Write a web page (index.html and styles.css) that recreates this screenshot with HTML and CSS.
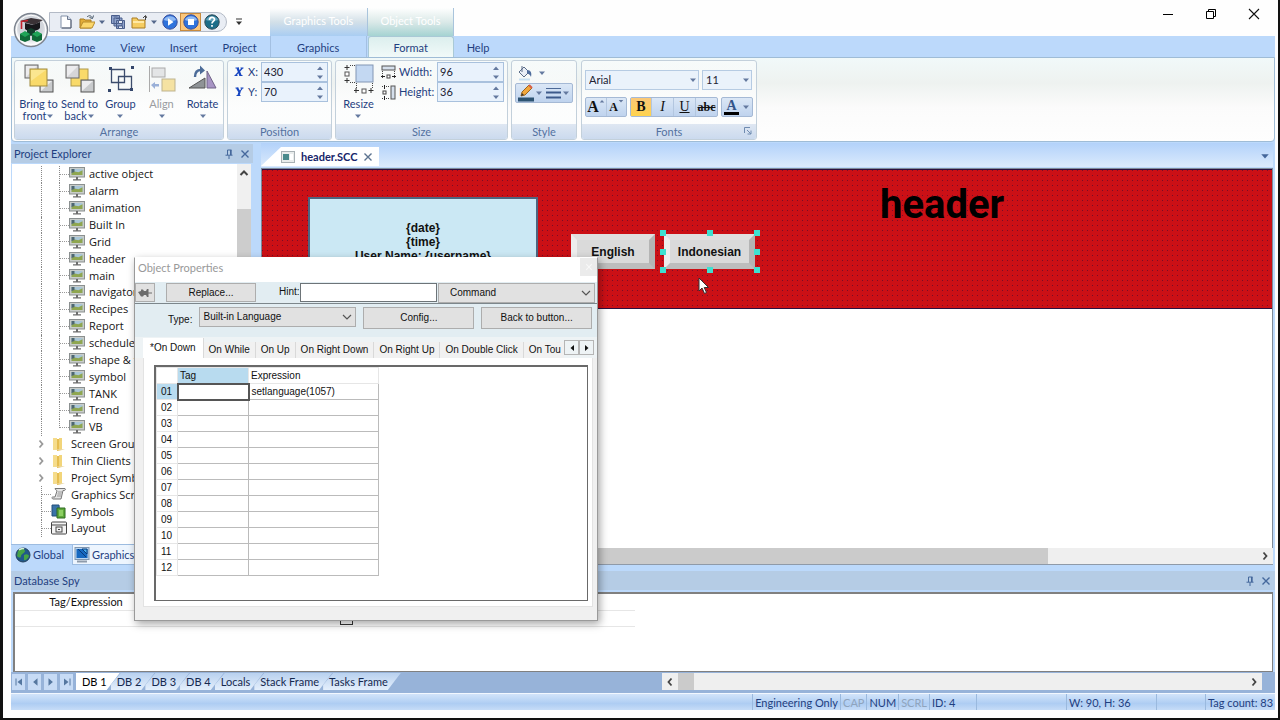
FILE: index.html
```html
<!DOCTYPE html>
<html lang="en">
<head>
    <meta charset="UTF-8">
    <meta name="viewport" content="width=device-width, initial-scale=1.0">
    <title>header.SCC</title>
    <link rel="stylesheet" href="styles.css">
</head>
<body>
    <svg class="sprite" aria-hidden="true">
        <symbol id="i-screen" viewBox="0 0 16 14">
            <rect x="0.5" y="0.5" width="15" height="9.5" fill="#c9cdca" stroke="#8b9090"/>
            <rect x="2.5" y="2" width="11" height="6" fill="#a9c6d8"/>
            <path d="M2.5 8V5.5l3-1 4 .8 4-2V8z" fill="#8fa650"/>
            <path d="M2.5 2h3v3l-3 1z" fill="#4f6770"/>
            <path d="M7 10h2v2.5H7zM4 12.2h8v1.3H4z" fill="#6d6d6d"/>
        </symbol>
        <symbol id="i-folder" viewBox="0 0 14 14">
            <path d="M2 1h4v12H2z" fill="#f5dc8c"/>
            <path d="M6 2h5v11l-5 1z" fill="#e6bd50"/>
            <path d="M8 1h3v11l-3 .5z" fill="#f2d57a"/>
            <path d="M2 13l9-1 3 1z" fill="#ead9a8"/>
        </symbol>
        <symbol id="i-pin" viewBox="0 0 10 10">
            <path d="M3.5 1h4M3.5 1v5M6.5 1v5M7.2 1v5M1.5 6.2h7M5 6.5V10" stroke="currentColor" fill="none"/>
        </symbol>
        <symbol id="i-close" viewBox="0 0 10 10">
            <path d="M1.5 1.5l7 7M8.5 1.5l-7 7" stroke="currentColor" stroke-width="1.4" fill="none"/>
        </symbol>
        <symbol id="i-back" viewBox="0 0 30 30">
            <rect x="1" y="1" width="13" height="13" fill="#d6d6d8" stroke="#666"/>
            <rect x="16" y="16" width="13" height="12" fill="#c8cacc" stroke="#555"/>
            <path d="M2 13L13 2H2zM17 27L28 17H17z" fill="#ececee"/>
        </symbol>
        <symbol id="i-up" viewBox="0 0 8 8"><path d="M1 6h6L4 2.5z" fill="currentColor"/></symbol>
        <symbol id="i-down" viewBox="0 0 8 8"><path d="M1 2.5h6L4 6z" fill="currentColor"/></symbol>
        <symbol id="i-left" viewBox="0 0 8 8"><path d="M6 1v6L2.5 4z" fill="currentColor"/></symbol>
        <symbol id="i-right" viewBox="0 0 8 8"><path d="M2 1v6l3.5-3z" fill="currentColor"/></symbol>
        <symbol id="i-chev-up" viewBox="0 0 10 10"><path d="M1.5 7L5 3.5 8.5 7" stroke="#444" stroke-width="2" fill="none"/></symbol>
        <symbol id="i-chev-left" viewBox="0 0 10 10"><path d="M6.5 1.5L3.5 5l3 3.5" stroke="#444" stroke-width="1.8" fill="none"/></symbol>
        <symbol id="i-chev-right" viewBox="0 0 10 10"><path d="M3.5 1.5L6.5 5l-3 3.5" stroke="currentColor" stroke-width="1.8" fill="none"/></symbol>
        <symbol id="i-chev-down" viewBox="0 0 10 10"><path d="M1 3l4 4 4-4" stroke="#555" stroke-width="1.2" fill="none"/></symbol>
    </svg>

    <div class="desktop">
    <div class="app">
        <header class="titlebar">
            <button class="orb" aria-label="Application menu">
                <svg width="36" height="36" viewBox="0 0 36 36">
                    <defs>
                        <radialGradient id="orb" cx=".5" cy=".4"><stop offset="0" stop-color="#c9ced6"/><stop offset=".75" stop-color="#d3d6dc"/><stop offset="1" stop-color="#f4f5f7"/></radialGradient>
                    </defs>
                    <circle cx="18" cy="18" r="16.5" fill="url(#orb)" stroke="#7d848f" stroke-width="1.5"/>
                    <circle cx="18" cy="18" r="14.8" fill="none" stroke="#fff"/>
                    <path d="M7 9l11-3 12 2-9 5z" fill="#3a3236"/>
                    <path d="M12 11v6c3 3 12 3 15-1v-6l-7 3z" fill="#17171b"/>
                    <path d="M8.5 9v8M8 9.5l7-1" stroke="#c2202c" stroke-width="1.6"/>
                    <path d="M18 16l4 2v4l-4 2-4-2v-4z" fill="#12402d"/>
                    <path d="M12 20l5 2v6l-5 2-5-2v-6z" fill="#0f6a38"/>
                    <path d="M24 20l5 2v6l-5 2-5-2v-6z" fill="#0f6a38"/>
                    <path d="M12 19l5 3-5 3-5-3zM24 19l5 3-5 3-5-3z" fill="#1fa457"/>
                </svg>
            </button>
            <div class="quick">
                <button aria-label="New"><svg width="14" height="16" viewBox="0 0 14 16"><path d="M2 2h6.5L12 5.5V14H2z" fill="#fff" stroke="#8190a8"/><path d="M8.5 2v3.5H12" fill="#cfd8e8" stroke="#6c7990"/><path d="M3 14h9V6" stroke="#565f70" fill="none"/></svg></button>
                <button aria-label="Open"><svg width="16" height="16" viewBox="0 0 16 16"><path d="M1 5h4l1 1h6v8H1z" fill="#e2ad38" stroke="#a97d22"/><path d="M4 8h12l-3 6H1z" fill="#fbd76c" stroke="#b78b2b"/><path d="M8 3c2-2 4-1.500 5 .5M14.500 1.500L13.500 4.500 10.500 3.500" fill="none" stroke="#456"/></svg></button>
                <button class="mini" aria-label="Open list"><svg width="8" height="8"><use href="#i-down"/></svg></button>
                <button aria-label="Save all"><svg width="16" height="16" viewBox="0 0 16 16" fill="#8fa3cc" stroke="#4b5f8c"><path d="M1.500 1.500h8v8h-8zM4 4h8v8H4zM6.500 6.500h8v8h-8z"/><path d="M8.500 6.500h4v3h-4zM3.500 2h4M6 4.500h4M8.500 12h4v2.500h-4z" fill="#e8edf6"/></svg></button>
                <button aria-label="Close project"><svg width="16" height="16" viewBox="0 0 16 16"><path d="M1 4h5l1 2h7v8H1z" fill="#f6cd62" stroke="#a97d22"/><path d="M2 8h11" stroke="#ffe9a5" stroke-width="2"/><path d="M14.500 6V2M12 4l2.500-2.500L16 4" fill="none" stroke="#444"/></svg></button>
                <button class="mini" aria-label="Project list"><svg width="8" height="8"><use href="#i-down"/></svg></button>
                <button aria-label="Run"><svg width="16" height="16" viewBox="0 0 16 16"><circle cx="8" cy="8" r="7.2" fill="#2f73dc" stroke="#3a4f9c"/><path d="M2 6c1-5 11-5 12 0-3 1.500-9 1.500-12 0z" fill="#8fb9f3"/><path d="M6 4.200v7.600L11.500 8z" fill="#fff"/></svg></button>
                <button class="lit" aria-label="Stop"><svg width="16" height="16" viewBox="0 0 16 16"><circle cx="8" cy="8" r="7.2" fill="#2f73dc" stroke="#3a4f9c"/><path d="M2 6c1-5 11-5 12 0-3 1.500-9 1.500-12 0z" fill="#8fb9f3"/><rect x="5" y="5" width="6" height="6" fill="#fff"/></svg></button>
                <button aria-label="Help"><svg width="16" height="16" viewBox="0 0 16 16"><circle cx="8" cy="8" r="7.2" fill="#1c6d89" stroke="#2d4a58"/><path d="M2 6c1-5 11-5 12 0-3 1.500-9 1.500-12 0z" fill="#5da0b8"/><path d="M5.500 6c0-3.500 5-3.500 5-.5 0 2-2.500 1.800-2.500 4M8 11v1.700" stroke="#fff" stroke-width="1.7" fill="none"/></svg></button>
            </div>
            <button class="quick-more" aria-label="Customize toolbar"><svg width="8" height="8" viewBox="0 0 8 8"><path d="M1 1h6" stroke="#333"/><path d="M1 3.500h6L4 7z" fill="#333"/></svg></button>
            <div class="context context-blue">Graphics Tools</div>
            <div class="context context-green">Object Tools</div>
            <div class="window-buttons">
                <button aria-label="Minimize"><svg width="12" height="12" viewBox="0 0 12 12"><path d="M1 6.500h10" stroke="#000"/></svg></button>
                <button aria-label="Restore"><svg width="12" height="12" viewBox="0 0 12 12" fill="none" stroke="#000"><path d="M1.500 3.500h7v7h-7zM3.500 3.500v-2h7v7h-2"/></svg></button>
                <button aria-label="Close"><svg width="12" height="12" viewBox="0 0 12 12"><path d="M1 1l10 10M11 1L1 11" stroke="#111" stroke-width="1.1"/></svg></button>
            </div>
        </header>

        <nav class="ribbon-tabs">
            <button>Home</button>
            <button>View</button>
            <button>Insert</button>
            <button>Project</button>
            <button class="tab-graphics">Graphics</button>
            <button class="tab-format">Format</button>
            <button>Help</button>
        </nav>

        <section class="ribbon">
            <div class="group group-arrange">
                <div class="group-body">
                    <button class="big">
                        <svg width="30" height="30" viewBox="0 0 30 30"><use href="#i-back"/><rect x="6" y="5" width="17" height="17" fill="#f9da6a" stroke="#a08a3c"/><path d="M7 6h15L7 17z" fill="#fbe690"/></svg>
                        <span>Bring to<br>front<svg width="8" height="8"><use href="#i-down"/></svg></span>
                    </button>
                    <button class="big">
                        <svg width="30" height="30" viewBox="0 0 30 30"><rect x="6" y="5" width="17" height="17" fill="#f9da6a" stroke="#b09a4c"/><use href="#i-back"/></svg>
                        <span>Send to<br>back<svg width="8" height="8"><use href="#i-down"/></svg></span>
                    </button>
                    <button class="big">
                        <svg width="30" height="30" viewBox="0 0 30 30" fill="none" stroke="#3c4c6c" stroke-width="1.3"><path d="M5.500 5.500h13v13h-13zM12.500 12.500h13v13h-13z"/><path d="M3 3h3v3H3zM25 2h3v3h-3zM2 25h3v3H2zM24 24h3v3h-3z" fill="#34466b" stroke="none"/></svg>
                        <span>Group<br><svg width="8" height="8"><use href="#i-down"/></svg></span>
                    </button>
                    <button class="big" disabled>
                        <svg width="30" height="30" viewBox="0 0 30 30"><path d="M2.500 2v26" stroke="#aaa"/><rect x="5" y="4" width="13" height="9" fill="#e3e5e6" stroke="#aaa"/><rect x="15" y="15" width="13" height="12" fill="#f5e2a2" stroke="#bdb38f"/><path d="M4 21l4-3v2h4v2.500H8V25z" fill="#9ab0d8"/></svg>
                        <span>Align<br><svg width="8" height="8"><use href="#i-down"/></svg></span>
                    </button>
                    <button class="big">
                        <svg width="30" height="30" viewBox="0 0 30 30"><path d="M1 24h16V14z" fill="#8f9396" stroke="#555"/><path d="M19 24h9L19 7z" fill="#a794c4" stroke="#706488"/><path d="M7 13c0-5 2-7 6-7" fill="none" stroke="#4c6c98" stroke-width="2.4"/><path d="M12 1.500l5 5-5 4z" fill="#4c6c98"/></svg>
                        <span>Rotate<br><svg width="8" height="8"><use href="#i-down"/></svg></span>
                    </button>
                </div>
                <div class="group-label">Arrange</div>
            </div>

            <div class="group group-position">
                <div class="group-body fields">
                    <div class="field">
                        <svg width="10" height="10" viewBox="0 0 10 10"><path d="M3.500 1l3 7.500" stroke="#1746c0" stroke-width="2.2"/><path d="M8.500 1L1.500 8.500M1.500 1h3.500M6.500 1h3M.5 8.500h3M5.500 8.500h3" stroke="#1746c0" stroke-width="1.2"/></svg>
                        <label for="pos-x">X:</label>
                        <span class="spin"><input id="pos-x" type="text" value="430"><button aria-label="Increase X"><svg width="8" height="8"><use href="#i-up"/></svg></button><button aria-label="Decrease X"><svg width="8" height="8"><use href="#i-down"/></svg></button></span>
                    </div>
                    <div class="field">
                        <svg width="10" height="10" viewBox="0 0 10 10"><path d="M3 1l2.500 4-1 3.500" fill="none" stroke="#1746c0" stroke-width="2.2"/><path d="M8.500 1L5.500 5M1.500 1h3M6.500 1h3M2.500 8.500h4" stroke="#1746c0" stroke-width="1.2"/></svg>
                        <label for="pos-y">Y:</label>
                        <span class="spin"><input id="pos-y" type="text" value="70"><button aria-label="Increase Y"><svg width="8" height="8"><use href="#i-up"/></svg></button><button aria-label="Decrease Y"><svg width="8" height="8"><use href="#i-down"/></svg></button></span>
                    </div>
                </div>
                <div class="group-label">Position</div>
            </div>

            <div class="group group-size">
                <div class="group-body">
                    <button class="big">
                        <svg width="30" height="30" viewBox="0 0 30 30"><rect x="12" y="1" width="17" height="17" fill="#c3d8f2" stroke="#8296b4"/><path d="M3 1v5M.5 3.500h5M3 14v5M.5 16.500h5M12 24v5M10 26.500h5M27 24v5M24.500 26.500h5" stroke="#333"/><rect x="1" y="8" width="4" height="4" fill="#fff" stroke="#555"/><rect x="18" y="25" width="4" height="4" fill="#fff" stroke="#555"/><path d="M6 1.500h5M6 18.500h5M12.500 19v5M28.500 19v5" stroke="#444" stroke-dasharray="1 1"/></svg>
                        <span>Resize<br><svg width="8" height="8"><use href="#i-down"/></svg></span>
                    </button>
                    <div class="fields">
                        <div class="field">
                            <svg width="15" height="15" viewBox="0 0 15 15"><rect x="1" y="1" width="13" height="4" fill="#d5dfeb" stroke="#555"/><path d="M1.500 6v8M13.500 6v8" stroke="#444" stroke-dasharray="1 1"/><path d="M0 11.500h4M11 11.500h4" stroke="#222"/><rect x="6" y="10" width="3" height="3" fill="#fff" stroke="#444"/></svg>
                            <label for="size-w">Width:</label>
                            <span class="spin"><input id="size-w" type="text" value="96"><button aria-label="Increase width"><svg width="8" height="8"><use href="#i-up"/></svg></button><button aria-label="Decrease width"><svg width="8" height="8"><use href="#i-down"/></svg></button></span>
                        </div>
                        <div class="field">
                            <svg width="15" height="15" viewBox="0 0 15 15"><rect x="10" y="1" width="4" height="13" fill="#d5dfeb" stroke="#555"/><path d="M1 1.500h8M1 13.500h8" stroke="#444" stroke-dasharray="1 1"/><path d="M3.500 0v4M3.500 11v4" stroke="#222"/><rect x="2" y="6" width="3" height="3" fill="#fff" stroke="#444"/></svg>
                            <label for="size-h">Height:</label>
                            <span class="spin"><input id="size-h" type="text" value="36"><button aria-label="Increase height"><svg width="8" height="8"><use href="#i-up"/></svg></button><button aria-label="Decrease height"><svg width="8" height="8"><use href="#i-down"/></svg></button></span>
                        </div>
                    </div>
                </div>
                <div class="group-label">Size</div>
            </div>

            <div class="group group-style">
                <div class="group-body fields">
                    <button class="fill" aria-label="Fill color">
                        <svg width="16" height="16" viewBox="0 0 16 16"><path d="M2 7l5-5 5 5-5 5z" fill="#e9eef6" stroke="#5c6d88"/><path d="M5 1v6" stroke="#5c6d88"/><path d="M10 5c4 0 5 3 4 7-1-3-3-3-4-4z" fill="#4f6c9c"/><path d="M2 14.500h11" stroke="#c8e0f2" stroke-width="2"/></svg>
                        <svg width="8" height="8"><use href="#i-down"/></svg>
                    </button>
                    <div class="cluster">
                        <button aria-label="Line color"><svg width="18" height="18" viewBox="0 0 18 18"><path d="M4 12l1-4 7-7 3 3-7 7z" fill="#f0a63c" stroke="#9a6420"/><path d="M4 12l1-3 2 2z" fill="#40352a"/><path d="M12 1l3 3" stroke="#d65f45" stroke-width="2"/><path d="M1 15.500h16" stroke="#2d5372" stroke-width="4"/></svg><svg width="8" height="8"><use href="#i-down"/></svg></button>
                        <button aria-label="Line style"><svg width="16" height="14" viewBox="0 0 16 14"><path d="M0 2.500h15" stroke="#4c6896"/><path d="M0 6.500h15" stroke="#3d5a8b" stroke-width="2"/><path d="M0 11.500h15" stroke="#3d5a8b" stroke-width="2"/></svg><svg width="8" height="8"><use href="#i-down"/></svg></button>
                    </div>
                </div>
                <div class="group-label">Style</div>
            </div>

            <div class="group group-fonts">
                <div class="group-body fonts">
                    <div class="font-row">
                        <span class="pick pick-family"><select aria-label="Font"><option>Arial</option></select><svg width="8" height="8"><use href="#i-down"/></svg></span>
                        <span class="pick pick-size"><select aria-label="Font size"><option>11</option></select><svg width="8" height="8"><use href="#i-down"/></svg></span>
                    </div>
                    <div class="font-row">
                        <div class="cluster letters"><button class="grow">A<svg width="6" height="6"><use href="#i-up"/></svg></button><button class="shrink">A<svg width="6" height="6"><use href="#i-down"/></svg></button></div>
                        <div class="cluster letters"><button class="on"><b>B</b></button><button><i>I</i></button><button><u>U</u></button><button class="strike"><s>abc</s></button></div>
                        <div class="cluster letters"><button class="color"><span>A</span><svg width="8" height="8"><use href="#i-down"/></svg></button></div>
                    </div>
                </div>
                <div class="group-label">Fonts
                    <svg class="launcher" width="8" height="8" viewBox="0 0 8 8" fill="none" stroke="#6f8bb0"><path d="M.5 6V.5H6M3 3l4 4M7 3.500V7H3.500"/></svg>
                </div>
            </div>
        </section>

        <main class="workspace">
            <aside class="explorer">
                <div class="panel-title">
                    <h2>Project Explorer</h2>
                    <button aria-label="Pin"><svg width="10" height="10"><use href="#i-pin"/></svg></button>
                    <button aria-label="Close"><svg width="10" height="10"><use href="#i-close"/></svg></button>
                </div>
                <div class="tree-box">
                    <ul class="tree">
                        <li class="leaf"><svg width="16" height="14"><use href="#i-screen"/></svg>active object</li>
                        <li class="leaf"><svg width="16" height="14"><use href="#i-screen"/></svg>alarm</li>
                        <li class="leaf"><svg width="16" height="14"><use href="#i-screen"/></svg>animation</li>
                        <li class="leaf"><svg width="16" height="14"><use href="#i-screen"/></svg>Built In</li>
                        <li class="leaf"><svg width="16" height="14"><use href="#i-screen"/></svg>Grid</li>
                        <li class="leaf"><svg width="16" height="14"><use href="#i-screen"/></svg>header</li>
                        <li class="leaf"><svg width="16" height="14"><use href="#i-screen"/></svg>main</li>
                        <li class="leaf"><svg width="16" height="14"><use href="#i-screen"/></svg>navigator</li>
                        <li class="leaf"><svg width="16" height="14"><use href="#i-screen"/></svg>Recipes</li>
                        <li class="leaf"><svg width="16" height="14"><use href="#i-screen"/></svg>Report</li>
                        <li class="leaf"><svg width="16" height="14"><use href="#i-screen"/></svg>schedule</li>
                        <li class="leaf"><svg width="16" height="14"><use href="#i-screen"/></svg>shape &amp; t</li>
                        <li class="leaf"><svg width="16" height="14"><use href="#i-screen"/></svg>symbol</li>
                        <li class="leaf"><svg width="16" height="14"><use href="#i-screen"/></svg>TANK</li>
                        <li class="leaf"><svg width="16" height="14"><use href="#i-screen"/></svg>Trend</li>
                        <li class="leaf last"><svg width="16" height="14"><use href="#i-screen"/></svg>VB</li>
                        <li class="folder"><svg class="twist" width="10" height="10"><use href="#i-chev-right"/></svg><svg width="14" height="14"><use href="#i-folder"/></svg>Screen Group</li>
                        <li class="folder"><svg class="twist" width="10" height="10"><use href="#i-chev-right"/></svg><svg width="14" height="14"><use href="#i-folder"/></svg>Thin Clients</li>
                        <li class="folder"><svg class="twist" width="10" height="10"><use href="#i-chev-right"/></svg><svg width="14" height="14"><use href="#i-folder"/></svg>Project Symb</li>
                        <li class="node"><svg width="16" height="15" viewBox="0 0 16 15"><path d="M4 1.500h10c1 1 0 2-1 2h-1L10 12H2c-2-1-1-2 0-2h2l2-6c0-1-2-1-2-2.500z" fill="#e4e4e4" stroke="#777"/><path d="M7 5h4M6.500 7h4M6 9h4" stroke="#999"/></svg>Graphics Scrip</li>
                        <li class="node"><svg width="16" height="15" viewBox="0 0 16 15"><path d="M1 1h7l1 11H1z" fill="#3973a8" stroke="#234f7b"/><path d="M6 4h8v10H6z" fill="#5da83a" stroke="#2f6a20"/><path d="M8 6h4v6H8z" fill="#8ccf62"/></svg>Symbols</li>
                        <li class="node last"><svg width="16" height="15" viewBox="0 0 16 15" fill="#f4f4f4" stroke="#444"><rect x=".5" y="1" width="15" height="12" rx="1"/><path d="M1 4h14"/><rect x="5" y="6" width="6" height="5"/><path d="M7 8.500h2"/></svg>Layout</li>
                    </ul>
                    <div class="vscroll"><svg width="10" height="10"><use href="#i-chev-up"/></svg><div class="thumb"></div></div>
                </div>
                <div class="explorer-tabs">
                    <button><svg width="16" height="16" viewBox="0 0 16 16"><circle cx="8" cy="8" r="7" fill="#20588a" stroke="#24405c"/><path d="M3 4c3-4 7-2 7 0S6 7 6 9s-2 2-4 0zM9 8c3-2 5 0 5 1-1 3-4 5-5 4z" fill="#46a346"/><path d="M4 3c1-1 4-2 5-1" stroke="#d5eed8" stroke-width="1.5" fill="none"/></svg>Global</button>
                    <button class="active"><svg width="16" height="16" viewBox="0 0 16 16"><rect x="1" y="0.5" width="14" height="12" fill="#b9d5f1" stroke="#7f95ae"/><rect x="2.5" y="2" width="11" height="9" fill="#1668c0"/><path d="M4 2l8 8M8 2h5v5z" stroke="#073a7c" fill="#49b0ee"/><path d="M3 14.500h10" stroke="#8e9bab" stroke-width="2"/></svg>Graphics</button>
                </div>
            </aside>

            <section class="editor">
                <div class="doc-tabs">
                    <div class="doc-tab">
                        <svg width="14" height="12" viewBox="0 0 14 12"><rect x=".5" y=".5" width="13" height="11" fill="#e9ecec" stroke="#a9b1b5"/><rect x="2" y="3" width="6" height="6" fill="#4b8a8c"/><path d="M9 3h3v6H9z" fill="#fff"/></svg>
                        <b>header.SCC</b>
                        <button aria-label="Close document"><svg width="10" height="10"><use href="#i-close"/></svg></button>
                    </div>
                    <svg class="doc-more" width="10" height="10" viewBox="0 0 8 8"><use href="#i-down"/></svg>
                </div>
                <div class="canvas">
                    <div class="screen">
                        <div class="info">{date}<br>{time}<br>User Name: {username}</div>
                        <div class="heading">header</div>
                        <button class="lang lang-en">English</button>
                        <button class="lang lang-id">Indonesian</button>
                        <svg class="handles" width="100" height="44" viewBox="0 0 100 44" fill="#3fe0d0">
                            <path d="M1 1h6v6H1zM48 1h6v6h-6zM95 1h6v6h-6zM1 20h6v6H1zM95 20h6v6h-6zM1 38h6v6H1zM48 38h6v6h-6zM95 38h6v6h-6z"/>
                        </svg>
                        <svg class="pointer" width="12" height="18" viewBox="0 0 12 18"><path d="M1 1v13l3-3 2.500 5.500 2-1L6.200 10.500h4.300z" fill="#fff" stroke="#333"/></svg>
                    </div>
                </div>
                <div class="hscroll"><div class="thumb"></div><svg width="10" height="10" color="#444"><use href="#i-chev-right"/></svg></div>
            </section>
        </main>

        <section class="spy">
            <div class="panel-title">
                <h2>Database Spy</h2>
                <button aria-label="Pin"><svg width="10" height="10"><use href="#i-pin"/></svg></button>
                <button aria-label="Close"><svg width="10" height="10"><use href="#i-close"/></svg></button>
            </div>
            <div class="spy-box">
                <table class="spy-table">
                    <tr><th>Tag/Expression</th><th></th><th></th></tr>
                    <tr><td></td><td><input type="checkbox" aria-label="Continuous"></td><td></td></tr>
                </table>
            </div>
            <div class="sheets">
                <button class="nav" aria-label="First"><svg width="10" height="10" viewBox="0 0 10 10"><path d="M2 1.500v7" stroke="#55779f"/><path d="M8 1.500v7L3.500 5z" fill="#55779f"/></svg></button>
                <button class="nav" aria-label="Previous"><svg width="10" height="10" viewBox="0 0 8 8"><use href="#i-left"/></svg></button>
                <button class="nav" aria-label="Next"><svg width="10" height="10" viewBox="0 0 8 8"><use href="#i-right"/></svg></button>
                <button class="nav" aria-label="Last"><svg width="10" height="10" viewBox="0 0 10 10"><path d="M8 1.500v7" stroke="#55779f"/><path d="M2 1.500v7L6.500 5z" fill="#55779f"/></svg></button>
                <button class="sheet active"><span>DB 1</span></button>
                <button class="sheet"><span>DB 2</span></button>
                <button class="sheet"><span>DB 3</span></button>
                <button class="sheet"><span>DB 4</span></button>
                <button class="sheet"><span>Locals</span></button>
                <button class="sheet"><span>Stack Frame</span></button>
                <button class="sheet"><span>Tasks Frame</span></button>
                <div class="hscroll"><svg width="10" height="10"><use href="#i-chev-left"/></svg><div class="thumb"></div><svg class="end" width="10" height="10" color="#444"><use href="#i-chev-right"/></svg></div>
            </div>
        </section>

        <footer class="status">
            <span>Engineering Only</span>
            <span class="off">CAP</span>
            <span>NUM</span>
            <span class="off">SCRL</span>
            <span class="id">ID: 4</span>
            <span class="blank-wide"></span>
            <span class="dims">W: 90, H: 36</span>
            <span class="blank"></span>
            <span class="count">Tag count: 83</span>
        </footer>

        <div class="dialog" role="dialog" aria-labelledby="dialog-title">
            <div class="dialog-title"><span id="dialog-title">Object Properties</span><button aria-label="Close"><svg width="8" height="8"><use href="#i-close"/></svg></button></div>
            <div class="dialog-bar">
                <button class="tack" aria-label="Keep open"><svg width="14" height="10" viewBox="0 0 14 10"><path d="M0 4l3-1V1.500h2L6 3h2l1-2h1.500v8H9L8 7H6L5 8.500H3z" fill="#6c6c6c"/><path d="M10 5h4" stroke="#6c6c6c"/></svg></button>
                <button class="replace">Replace...</button>
                <label for="hint">Hint:</label>
                <input id="hint" type="text">
                <span class="combo combo-command"><select aria-label="Dynamic"><option>Command</option></select><svg width="10" height="10"><use href="#i-chev-down"/></svg></span>
            </div>
            <div class="dialog-type">
                <label for="type">Type:</label>
                <span class="combo"><select id="type"><option>Built-in Language</option></select><svg width="10" height="10"><use href="#i-chev-down"/></svg></span>
                <button>Config...</button>
                <button>Back to button...</button>
            </div>
            <div class="dialog-tabs">
                <div class="tab-strip">
                    <button class="active">*On Down</button>
                    <button>On While</button>
                    <button>On Up</button>
                    <button>On Right Down</button>
                    <button>On Right Up</button>
                    <button>On Double Click</button>
                    <button>On Tou</button>
                </div>
                <button class="step" aria-label="Scroll tabs left"><svg width="8" height="8"><use href="#i-left"/></svg></button>
                <button class="step" aria-label="Scroll tabs right"><svg width="8" height="8"><use href="#i-right"/></svg></button>
            </div>
            <div class="sheet-panel">
                <div class="grid-frame">
                    <table class="grid">
                        <tr><th></th><th class="sel">Tag</th><th>Expression</th></tr>
                        <tr><th class="sel">01</th><td class="cursor"></td><td>setlanguage(1057)</td></tr>
                        <tr><th>02</th><td></td><td></td></tr>
                        <tr><th>03</th><td></td><td></td></tr>
                        <tr><th>04</th><td></td><td></td></tr>
                        <tr><th>05</th><td></td><td></td></tr>
                        <tr><th>06</th><td></td><td></td></tr>
                        <tr><th>07</th><td></td><td></td></tr>
                        <tr><th>08</th><td></td><td></td></tr>
                        <tr><th>09</th><td></td><td></td></tr>
                        <tr><th>10</th><td></td><td></td></tr>
                        <tr><th>11</th><td></td><td></td></tr>
                        <tr><th>12</th><td></td><td></td></tr>
                    </table>
                </div>
            </div>
        </div>
    </div>
    </div>
</body>
</html>
```

FILE: styles.css
```css
:root {
    --ui: Lato, "Open Sans", sans-serif;
    --tree: "Open Sans", "Noto Sans", sans-serif;
    --dialog: "Liberation Sans", Arial, sans-serif;
    --blue: #bcd9fb;
    --title: #b5cce5;
    --text: #1f4080;
    --arrow: #64799f;
    --line: #a9c1dd;
}

* {
    margin: 0;
    padding: 0;
    box-sizing: border-box;
}

body {
    min-height: 100vh;
    background: #111;
    font-family: var(--ui);
    font-size: 11px;
    line-height: 12px;
    color: var(--text);
    display: flex;
}

button, input, select {
    font: inherit;
    color: inherit;
    border: none;
    background: none;
    appearance: none;
    border-radius: 0;
    outline: none;
}

svg {
    display: block;
    flex: none;
}

.sprite {
    position: absolute;
    width: 0;
    height: 0;
}

.desktop {
    flex: 1;
    display: flex;
    margin: 0 2px 2px 3px;
    padding: 0 3px 8px 8px;
    background: #fefefe;
}

.app {
    position: relative;
    flex: 1;
    min-width: 0;
    display: flex;
    flex-direction: column;
    background: var(--blue);
}

/* title bar */
.titlebar {
    display: flex;
    align-items: flex-end;
    height: 36px;
    background: #fefefe;
}

.orb {
    position: absolute;
    left: 2px;
    top: 12px;
    z-index: 2;
}

.quick {
    display: flex;
    align-items: center;
    height: 20px;
    width: 178px;
    margin: 0 0 4px 38px;
    padding-left: 5px;
    border: 1px solid #b3bac6;
    border-radius: 0 10px 10px 0;
    background: #e9edf4;
}

.quick button {
    width: 21px;
    height: 18px;
    display: grid;
    place-items: center;
}

.quick .mini {
    width: 10px;
    color: #55688c;
}

.quick .lit {
    border: 1px solid #c98b3d;
    background: #fbc77c;
}

.quick-more {
    align-self: center;
    margin: 8px 27px 0 8px;
}

.context {
    height: 28px;
    padding-top: 7px;
    text-align: center;
    color: #fff;
    border-right: 1px solid #a9c4dc;
}

.context-blue {
    width: 98px;
    background: linear-gradient(#fefefe, #d3e0e8 50%, #a9cdf2);
}

.context-green {
    width: 86px;
    background: linear-gradient(#fefefe, #dbe9e8 50%, #a5d3d2);
}

.window-buttons {
    display: flex;
    gap: 31px;
    margin: 0 15px 16px auto;
}

/* ribbon */
.ribbon-tabs {
    display: flex;
    gap: 1px;
    height: 21px;
    padding-left: 43px;
}

.ribbon-tabs button {
    padding: 1px 12px 0;
    height: 22px;
}

.ribbon-tabs .tab-graphics {
    width: 97px;
    border: solid #a3c0e2;
    border-width: 0 1px;
}

.ribbon-tabs .tab-format {
    width: 86px;
    border: 1px solid #a9c9d6;
    border-bottom: none;
    border-radius: 3px 3px 0 0;
    background: linear-gradient(#dcefee, #f2faf9);
}

.ribbon {
    display: flex;
    gap: 3px;
    height: 85px;
    padding: 2px 2px 1px;
    border: 1px solid #9fbcd6;
    border-radius: 0 0 4px 4px;
    background: linear-gradient(#f1f9f9, #eef2f0 30%, #fbfbfb 60%, #fefefe);
}

.group {
    display: flex;
    flex-direction: column;
    border: 1px solid #c3d0db;
    border-radius: 3px;
    background: linear-gradient(rgba(255, 255, 255, .4), #fcfdfd);
}

.group-arrange { width: 210px; }
.group-position { width: 105px; }
.group-size { width: 173px; }
.group-style { width: 66px; }
.group-fonts { width: 176px; margin-left: 1px; }

.group-body {
    flex: 1;
    display: flex;
}

.group-label {
    height: 15px;
    line-height: 15px;
    text-align: center;
    color: #5371a0;
    background: linear-gradient(#dfe7f2, #cbdaee);
    border-radius: 0 0 2px 2px;
}

.launcher {
    float: right;
    margin: 3px 4px 0 -12px;
}

.group-arrange .group-body {
    padding-left: 3px;
}

.big {
    width: 41px;
    display: flex;
    flex-direction: column;
    align-items: center;
    padding-top: 3px;
    white-space: nowrap;
}

.big span {
    margin-top: 4px;
}

.big span svg {
    display: inline-block;
    color: var(--arrow);
}

.big:disabled {
    color: #9a9ca0;
}

.fields {
    display: flex;
    flex-direction: column;
    align-items: flex-end;
    padding: 1px 3px;
}

.field {
    display: flex;
    align-items: center;
    height: 20px;
}

.field label {
    width: 17px;
    padding-left: 4px;
}

.group-size .big {
    width: 46px;
}

.group-size .fields {
    flex: 1;
    align-items: flex-start;
    padding-left: 0;
}

.group-size .field label {
    width: 41px;
    padding-left: 3px;
}

.spin {
    display: grid;
    grid-template-columns: 1fr 14px;
    grid-template-rows: 9px 9px;
    width: 67px;
    border: 1px solid var(--line);
    background: #e9f2fc;
    color: var(--arrow);
}

.spin input {
    grid-row: span 2;
    width: 100%;
    padding-left: 2px;
    color: #223;
}

.spin button {
    display: grid;
    place-items: center;
}

.group-style .fields {
    align-items: flex-start;
}

.fill {
    display: flex;
    align-items: center;
    gap: 5px;
    height: 21px;
    padding-left: 2px;
    color: var(--arrow);
}

.cluster {
    display: flex;
    height: 20px;
    border: 1px solid #a5b9d5;
    border-radius: 2px;
    background: linear-gradient(#dbe7f6, #bfd3ee);
    color: var(--arrow);
}

.cluster button {
    display: flex;
    align-items: center;
    justify-content: center;
}

.group-style .cluster button {
    width: 28px;
}

.fonts {
    flex-direction: column;
    gap: 7px;
    padding: 9px 3px 0;
}

.font-row {
    display: flex;
    gap: 3px;
}

.pick, .combo {
    display: grid;
    align-items: center;
}

.pick select, .pick svg, .combo select, .combo svg {
    grid-area: 1 / 1;
}

.pick svg, .combo svg {
    justify-self: end;
    margin-right: 2px;
    color: var(--arrow);
    pointer-events: none;
}

.pick select {
    width: 100%;
    height: 20px;
    padding-left: 3px;
    border: 1px solid #b6cbe3;
    background: #eaf2fb;
    color: #223;
}

.pick-family { width: 114px; }
.pick-size { width: 50px; }

.letters {
    font-family: "Liberation Serif", serif;
    font-size: 14px;
    color: #111;
}

.letters button {
    width: 22px;
}

.letters button + button {
    border-left: 1px solid #b3c6df;
}

.letters svg {
    align-self: flex-start;
    color: var(--arrow);
}

.letters .grow, .letters .shrink {
    width: 20px;
    font-size: 16px;
    font-weight: bold;
}

.letters .shrink {
    font-size: 12px;
}

.letters .on {
    width: 20px;
    background: linear-gradient(#fbc878, #ffd34d);
}

.letters .strike {
    font-size: 12px;
    font-weight: bold;
}

.letters .color {
    width: 30px;
    gap: 3px;
}

.letters .color svg {
    align-self: center;
}

.color span {
    width: 15px;
    line-height: 13px;
    color: #35558a;
    font-weight: bold;
    border-bottom: 3px solid #000;
}

/* workspace */
.workspace {
    flex: 1;
    display: flex;
    gap: 8px;
    padding: 2px 2px 6px 0;
}

.explorer {
    width: 242px;
    display: flex;
    flex-direction: column;
}

.panel-title {
    display: flex;
    align-items: center;
    gap: 6px;
    height: 19px;
    padding: 0 3px;
    background: var(--title);
}

.panel-title h2 {
    flex: 1;
    font-size: 11px;
    font-weight: normal;
}

.panel-title button {
    color: #45689c;
}

.tree-box {
    flex: 1;
    display: flex;
    margin: 1px 2px 0 1px;
    background: #fff;
    font-family: var(--tree);
}

.tree {
    flex: 1;
    display: flex;
    flex-direction: column;
    padding: 2px 0 7px;
    list-style: none;
    color: #151515;
    white-space: nowrap;
    overflow: hidden;
}

.tree li {
    flex: 1;
    display: flex;
    align-items: center;
    margin-left: 29px;
    border-left: 1px dotted #888;
}

.tree .leaf {
    gap: 4px;
}

.tree .leaf::before {
    content: "";
    align-self: stretch;
    width: 10px;
    margin: 0 -5px 0 17px;
    border-left: 1px dotted #888;
    background: linear-gradient(90deg, #999 50%, transparent 50%) 0 50% / 2px 1px repeat-x;
}

.tree .leaf.last::before {
    margin-bottom: 8px;
    background-position: 0 100%;
}

.tree .folder {
    border-left-color: transparent;
}

.twist {
    margin: 0 5px 0 -6px;
    color: #999;
}

.tree .folder svg + svg {
    margin-right: 6px;
}

.tree .node::before {
    content: "";
    width: 9px;
    height: 1px;
    background: linear-gradient(90deg, #999 50%, transparent 50%) 0 0 / 2px 1px repeat-x;
}

.tree .node svg {
    margin-right: 4px;
}

.vscroll {
    width: 14px;
    background: #f0f0f0;
}

.vscroll svg {
    margin: 4px 2px 31px;
}

.vscroll .thumb {
    height: 200px;
    background: #cdcdcd;
}

.explorer-tabs {
    display: flex;
    height: 21px;
    border-top: 1px solid #9dbce0;
}

.explorer-tabs button {
    display: flex;
    align-items: center;
    gap: 2px;
    padding: 0 8px 0 4px;
}

.explorer-tabs .active {
    padding: 0 6px 0 1px;
    border: 1px solid #9dbce0;
    border-top: none;
    background: #edf5fe;
}

.editor {
    flex: 1;
    min-width: 0;
    display: flex;
    flex-direction: column;
}

.doc-tabs {
    display: flex;
    align-items: flex-end;
    justify-content: space-between;
    height: 24px;
    margin-top: -1px;
    padding-bottom: 1px;
    background: linear-gradient(#b3d2fa, #dbeafc);
}

.doc-tab {
    display: flex;
    align-items: center;
    gap: 6px;
    height: 19px;
    padding: 0 6px 0 20px;
    background: #fff;
    color: #16246a;
    clip-path: polygon(20px 0, 100% 0, 100% 100%, 0 100%);
}

.doc-tab button {
    color: #5c7390;
}

.doc-more {
    margin: 0 3px 5px;
    color: #44669a;
}

.canvas {
    flex: 1;
    margin-top: 1px;
    border: 1px solid #7e8a98;
    border-width: 1px 1px 0;
    background: #fff;
}

.screen {
    position: relative;
    height: 140px;
    border: 1px solid #2c1140;
    border-width: 1px 0;
    background: #cb1016 conic-gradient(at 1px 1px, transparent 75%, #7a0c26 0) 0 0 / 5px 5px;
    font-family: var(--dialog);
    font-weight: bold;
    color: #111;
}

.info {
    position: absolute;
    left: 46px;
    top: 27px;
    width: 230px;
    height: 84px;
    padding-top: 22px;
    border: 2px solid #4d6580;
    background: #cbe8f4;
    font-size: 12px;
    line-height: 14px;
    text-align: center;
}

.heading {
    position: absolute;
    left: 618px;
    top: 11px;
    font-family: Roboto, sans-serif;
    font-size: 40px;
    line-height: 48px;
    color: #000;
}

.lang {
    position: absolute;
    top: 64px;
    height: 35px;
    border: 6px solid;
    border-color: #e0e0e0 #b4b4b4 #bdbdbd #ededed;
    background: #dadada;
    font-size: 12px;
    white-space: nowrap;
}

.lang-en { left: 309px; width: 84px; }
.lang-id { left: 402px; width: 91px; }

.handles {
    position: absolute;
    left: 397px;
    top: 59px;
    overflow: visible;
}

.pointer {
    position: absolute;
    left: 436px;
    top: 107px;
}

.hscroll {
    display: flex;
    align-items: center;
    height: 17px;
    background: #efefef;
    border-bottom: 1px solid #8f9aa8;
}

.hscroll .thumb {
    height: 100%;
    background: #cbcbcb;
}

.editor .hscroll {
    justify-content: space-between;
    padding-right: 3px;
}

.editor .hscroll .thumb {
    width: 78%;
}

/* database spy */
.spy .panel-title {
    padding-right: 4px;
}

.spy-box {
    height: 80px;
    margin: 2px 2px 0;
    border: solid #808080;
    border-width: 2px 1px 1px 2px;
    background: #fff;
}

.spy-table {
    width: 620px;
    border-collapse: collapse;
    table-layout: fixed;
    color: #111;
}

.spy-table th, .spy-table td {
    height: 16px;
    border-bottom: 1px solid #e6e6e6;
    font-weight: normal;
    text-align: center;
}

.spy-table th:nth-child(1) { width: 142px; }
.spy-table th:nth-child(2) { width: 378px; }

.spy-table input {
    display: block;
    width: 13px;
    height: 13px;
    margin: 0 auto;
    border: 1px solid #333;
}

.sheets {
    display: flex;
    align-items: flex-start;
    height: 21px;
    padding: 1px 13px 0 1px;
    background: #97b3d9;
    color: #16294f;
}

.nav {
    width: 13px;
    height: 16px;
    margin: 1px 3px 0 0;
    display: grid;
    place-items: center;
    background: #c7dbf5;
    color: #55779f;
}

.sheet {
    height: 17px;
    margin-right: -9px;
    padding: 0 13px 0 6px;
    background: linear-gradient(#b9d1ef, #e4effc);
    clip-path: polygon(10px 0, 100% 0, calc(100% - 13px) 100%, 0 100%, 0 70%);
}

.sheet.active {
    background: #fff;
    color: #000;
    clip-path: polygon(0 0, 100% 0, calc(100% - 13px) 100%, 0 100%);
}

.sheets .hscroll {
    width: 600px;
    height: 17px;
    margin-left: auto;
    padding: 0 3px;
    border: none;
}

.sheets .thumb {
    width: 16px;
    margin-left: 3px;
}

.hscroll .end {
    margin-left: auto;
}

.status {
    display: flex;
    justify-content: flex-end;
    height: 17px;
    line-height: 17px;
    border-top: 1px solid #f2f8ff;
    background: linear-gradient(#d2e4fa, #aecdf3 60%, #c6dcf7);
    white-space: nowrap;
}

.status span {
    padding: 0 2px;
    border-left: 1px solid #9ab9de;
}

.status .off { color: #8fa4bd; }
.status .id { width: 47px; }
.status .blank-wide { width: 90px; }
.status .dims { width: 90px; }
.status .blank { width: 49px; }
.status .count { width: 70px; }

/* object properties */
.dialog {
    position: absolute;
    left: 123px;
    top: 257px;
    z-index: 5;
    width: 464px;
    height: 364px;
    display: flex;
    flex-direction: column;
    border: 1px solid #9a9a9a;
    border-top-color: #fff;
    background: #f0f0f0;
    box-shadow: 2px 3px 8px rgba(0, 0, 0, .35);
    font-family: var(--dialog);
    font-size: 10px;
    color: #111;
}

.dialog-title {
    display: flex;
    justify-content: space-between;
    height: 24px;
    padding-left: 3px;
    line-height: 20px;
    background: #fff;
    font-family: var(--ui);
    font-size: 11px;
    color: #999;
}

.dialog-title button {
    width: 17px;
    height: 18px;
    display: grid;
    place-items: center;
    background: #ebebeb;
    color: #f8f8f8;
}

.dialog-bar, .dialog-type {
    display: flex;
    background: #e2edf2;
}

.dialog-bar {
    height: 22px;
    padding: 1px 2px 0 0;
    border-bottom: 1px solid #7c868b;
}

.dialog-bar button, .dialog-type button, .combo select {
    border: 1px solid #adadad;
    background: #e1e1e1;
}

.dialog-bar button, .dialog-bar input, .dialog-bar select {
    height: 19px;
}

.tack {
    width: 20px;
    display: grid;
    place-items: center;
}

.replace {
    width: 90px;
    margin: 0 23px 0 11px;
}

.dialog-bar label {
    line-height: 18px;
}

.dialog-bar input {
    flex: 1;
    min-width: 0;
    border: 1px solid #6d7478;
    background: #fff;
}

.combo select {
    width: 157px;
    height: 20px;
    padding-left: 3px;
}

.combo svg {
    margin-right: 4px;
}

.combo-command {
    margin-left: 1px;
}

.combo-command select {
    padding-left: 11px;
}

.dialog-type {
    height: 33px;
    padding: 3px 5px 0 33px;
    gap: 7px;
}

.dialog-type label {
    line-height: 26px;
}

.dialog-type .combo {
    align-self: flex-start;
}

.dialog-type button {
    flex: 1;
    height: 22px;
}

.dialog-tabs {
    display: flex;
    align-items: flex-end;
    height: 21px;
    padding: 0 3px 0 8px;
    background: #eef3f5;
}

.tab-strip {
    flex: 1;
    display: flex;
    align-items: flex-end;
    overflow: hidden;
    white-space: nowrap;
}

.tab-strip button {
    flex: none;
    height: 16px;
    padding: 0 5px;
    border-right: 1px solid #d9d9d9;
    background: #f1f1f1;
}

.tab-strip .active {
    height: 20px;
    padding: 0 7px;
    background: #fff;
}

.step {
    width: 15px;
    height: 15px;
    margin-bottom: 3px;
    display: grid;
    place-items: center;
    border: 1px solid #b5b5b5;
}

.sheet-panel {
    flex: 1;
    display: flex;
    margin: 0 4px 13px 8px;
    padding: 7px 4px 5px 10px;
    border: 1px solid #e3e3e3;
    border-top: none;
    background: #fff;
}

.grid-frame {
    flex: 1;
    border: solid #696969;
    border-width: 2px 1px 1px 2px;
}

.grid {
    border-collapse: collapse;
    table-layout: fixed;
    width: 223px;
}

.grid tr {
    height: 16px;
}

.grid th, .grid td {
    padding: 0 2px;
    border: 1px solid #bbb;
    font-weight: normal;
    text-align: left;
    line-height: 13px;
}

.grid th {
    border-color: #e6e6e6;
}

.grid th:first-child {
    width: 21px;
    padding-left: 4px;
}

.grid th:nth-child(2) { width: 71px; }

.grid .sel {
    background: #b8dbef;
}

.grid .cursor {
    border: 2px solid #555;
}
```
